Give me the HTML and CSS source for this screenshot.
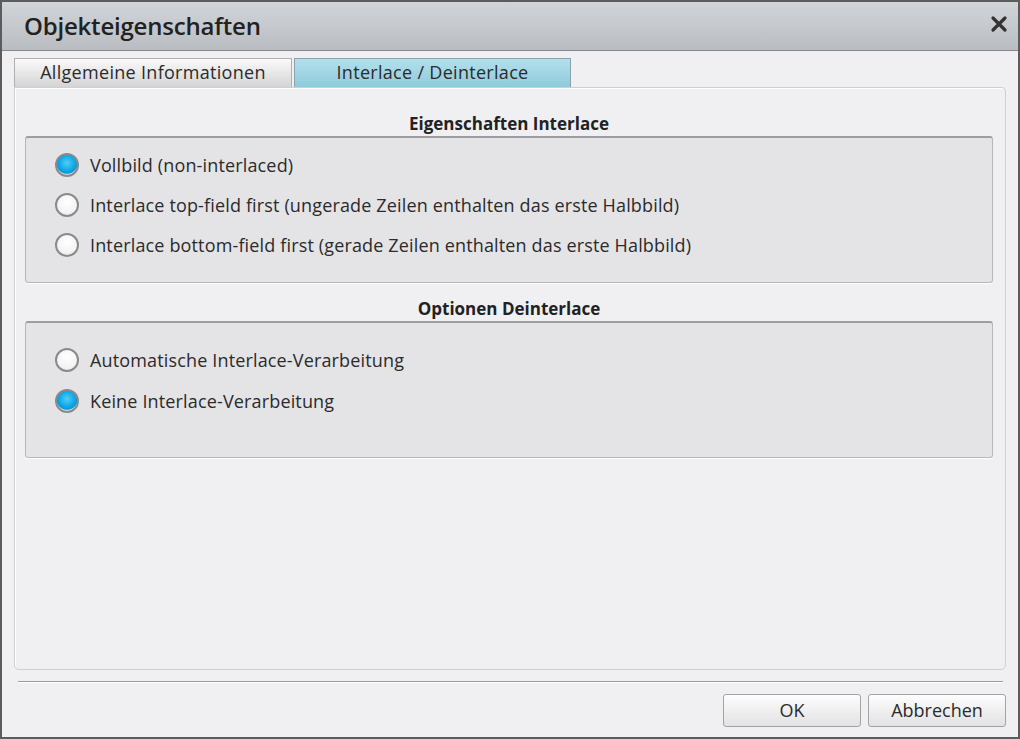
FILE: index.html
```html
<!DOCTYPE html>
<html lang="de">
<head>
<meta charset="utf-8">
<title>Objekteigenschaften</title>
<link rel="stylesheet" href="styles.css">
</head>
<body>
<div class="window">
  <div class="titlebar">
    <span class="title">Objekteigenschaften</span>
    <svg class="close" width="18" height="18" viewBox="0 0 18 18"><path d="M3 3 L15 15 M15 3 L3 15" stroke="#333" stroke-width="3.2" stroke-linecap="round"/></svg>
  </div>
  <div class="content">
    <div class="tabs">
      <div class="tab">Allgemeine Informationen</div>
      <div class="tab active">Interlace / Deinterlace</div>
    </div>
    <div class="panel">
      <div class="heading">Eigenschaften Interlace</div>
      <div class="group group1">
        <div class="row"><span class="radio on"></span><span>Vollbild (non-interlaced)</span></div>
        <div class="row"><span class="radio"></span><span>Interlace top-field first (ungerade Zeilen enthalten das erste Halbbild)</span></div>
        <div class="row"><span class="radio"></span><span>Interlace bottom-field first (gerade Zeilen enthalten das erste Halbbild)</span></div>
      </div>
      <div class="heading heading2">Optionen Deinterlace</div>
      <div class="group group2">
        <div class="row"><span class="radio"></span><span>Automatische Interlace-Verarbeitung</span></div>
        <div class="row"><span class="radio on"></span><span>Keine Interlace-Verarbeitung</span></div>
      </div>
    </div>
    <div class="separator"></div>
    <div class="buttons">
      <div class="btn">OK</div>
      <div class="btn">Abbrechen</div>
    </div>
  </div>
</div>
</body>
</html>
```
FILE: styles.css
```css
html, body {
  margin: 0;
  padding: 0;
  background: #f0f0f2;
}
.window {
  width: 1020px;
  height: 739px;
  box-sizing: border-box;
  border: 2px solid #5c5c5e;
  background: #f0f0f2;
  display: flex;
  flex-direction: column;
  font-family: "Open Sans", "Noto Sans", sans-serif;
  color: #2b2b2b;
}
.titlebar {
  height: 48px;
  flex: none;
  display: flex;
  align-items: center;
  justify-content: space-between;
  padding: 0 10px 0 22px;
  background: linear-gradient(#d2d5d8, #b9bdc1);
  border-bottom: 1px solid #85898d;
}
.title {
  font-size: 24px;
  font-weight: 600;
  color: #222;
  letter-spacing: -0.2px;
  margin-top: -2px;
}
.close {
  margin-top: -5px;
}
.content {
  flex: 1;
  display: flex;
  flex-direction: column;
  padding: 7px 12px 0 12px;
}
.tabs {
  display: flex;
  gap: 2px;
  height: 29px;
  flex: none;
}
.tab {
  width: 278px;
  box-sizing: border-box;
  border: 1px solid #b0b0b0;
  border-bottom: none;
  background: linear-gradient(#fafafa, #d4d4d4);
  font-size: 18px;
  letter-spacing: 0.3px;
  text-align: center;
  line-height: 27px;
  color: #2b2b2b;
}
.tab.active {
  width: 277px;
  background: linear-gradient(#b3e0ec, #8fcadb);
  border-color: #8aa4ad;
}
.panel {
  height: 583px;
  flex: none;
  box-sizing: border-box;
  border: 1px solid #cfcfd3;
  box-shadow: inset 1px 1px 0 #fff;
  border-radius: 0 4px 5px 5px;
  padding: 24px 12px 0 10px;
  background: #f0f0f2;
}
.heading {
  font-size: 17px;
  font-weight: 700;
  text-align: center;
  line-height: 24px;
  color: #222;
}
.heading2 {
  margin-top: 14px;
}
.group {
  box-sizing: border-box;
  background: #e4e4e6;
  border: 1px solid #b8b8bb;
  border-top: 2px solid #9e9ea2;
  border-radius: 3px;
  box-shadow: 0 1px 0 #fff;
  padding-left: 29px;
  display: flex;
  flex-direction: column;
}
.group1 {
  height: 147px;
  padding-top: 14px;
  gap: 14px;
}
.group2 {
  height: 137px;
  padding-top: 24px;
  gap: 15px;
}
.row {
  display: flex;
  align-items: center;
  gap: 11px;
  height: 26px;
  font-size: 18px;
  letter-spacing: 0.15px;
}
.radio {
  width: 24px;
  height: 24px;
  box-sizing: border-box;
  border-radius: 50%;
  border: 2px solid #8a8a8c;
  background: radial-gradient(circle at 50% 35%, #ffffff 0, #f4f4f4 60%, #e6e6e6 100%);
  flex: none;
}
.radio.on {
  background: radial-gradient(circle at 50% 40%, #54cdf5 0, #14abe9 45%, #0b96d6 66%, #cfe7f2 72%, #f2f2f2 100%);
}
.separator {
  margin: 11px 3px 0 4px;
  height: 1px;
  background: #9a9a9c;
  border-bottom: 1px solid #fff;
  flex: none;
}
.buttons {
  display: flex;
  justify-content: flex-end;
  gap: 7px;
  margin-top: 11px;
}
.btn {
  width: 138px;
  height: 33px;
  box-sizing: border-box;
  border: 1px solid #a4a4a6;
  border-radius: 3px;
  background: linear-gradient(#fdfdfd, #e2e2e4);
  font-size: 18px;
  text-align: center;
  line-height: 31px;
  color: #2b2b2b;
}
```
